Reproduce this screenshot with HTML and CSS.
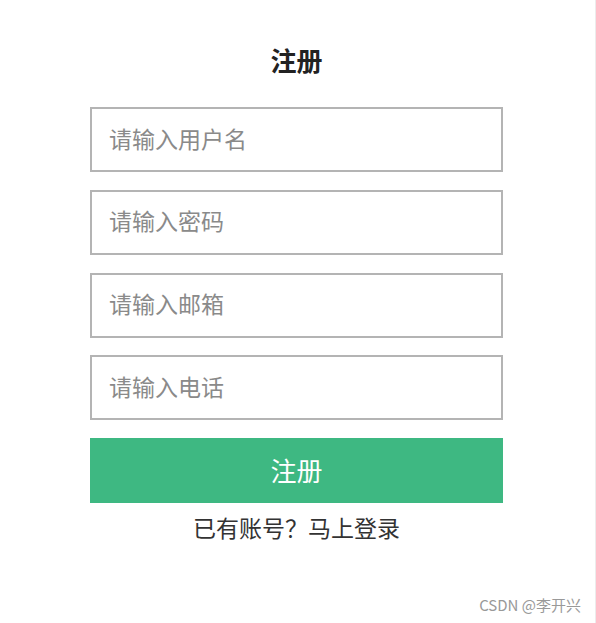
FILE: index.html
```html
<!DOCTYPE html>
<html lang="zh-CN">
<head>
  <meta charset="UTF-8">
  <title>注册</title>
  <link rel="stylesheet" href="styles.css">
</head>
<body>

<div class="page">
  <div class="register">
    <h2>注册</h2>
    <form class="form">
      <input type="text" placeholder="请输入用户名">
      <input type="password" placeholder="请输入密码">
      <input type="email" placeholder="请输入邮箱">
      <input type="text" placeholder="请输入电话">
      <button type="button">注册</button>
    </form>
    <p class="login-link">已有账号？马上登录</p>
  </div>
  <div class="watermark">CSDN @李开兴</div>
</div>

</body>
</html>
```

FILE: styles.css
```css
body {
  margin: 0;
  padding: 0;
  background: #fff;
  font-family: "Noto Sans CJK SC", "Noto Sans", sans-serif;
  color: #333;
}
.page {
  position: relative;
  width: 595px;
  height: 623px;
  border-right: 1px solid #ececec;
  overflow: hidden;
}
.register {
  width: 413px;
  margin-left: 90px;
}
.register h2 {
  margin: 44px 0 31px;
  font-size: 26px;
  line-height: 32px;
  text-align: center;
  font-weight: bold;
  color: #222;
}
.form {
  display: flex;
  flex-direction: column;
  gap: 17.75px;
}
.form input {
  height: 65px;
  box-sizing: border-box;
  border: 2px solid #b4b4b4;
  padding: 0 17px 4px;
  font-size: 23px;
  font-family: inherit;
  outline: none;
}
.form input::placeholder {
  color: #8a8a8a;
}
.form button {
  height: 65px;
  border: none;
  background: #3eb882;
  color: #fff;
  font-size: 26px;
  font-family: inherit;
  padding: 0 0 3px;
  cursor: pointer;
}
.login-link {
  margin: 8px 0 0;
  text-align: center;
  font-size: 23px;
  line-height: 32px;
  color: #333;
}
.watermark {
  position: absolute;
  right: 14px;
  bottom: 8px;
  font-size: 15px;
  color: #999;
}
```
